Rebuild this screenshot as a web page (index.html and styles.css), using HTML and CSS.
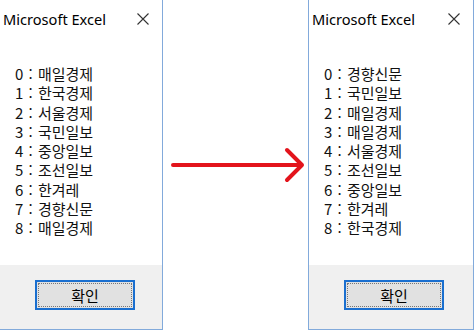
FILE: index.html
```html
<!DOCTYPE html>
<html lang="ko">
<head>
  <meta charset="UTF-8">
  <title>Msgbox order</title>
  <link rel="stylesheet" href="styles.css">
</head>
<body>
<div class="dialog dialog-left">
  <div class="titlebar">
    <span class="title">Microsoft Excel</span>
    <svg class="close" width="12" height="12" viewBox="0 0 12 12"><path d="M0.5 0.5 L11.5 11.5 M11.5 0.5 L0.5 11.5" stroke="#333" stroke-width="1.1" fill="none"/></svg>
  </div>
  <ul class="list">
    <li>0 : 매일경제</li>
    <li>1 : 한국경제</li>
    <li>2 : 서울경제</li>
    <li>3 : 국민일보</li>
    <li>4 : 중앙일보</li>
    <li>5 : 조선일보</li>
    <li>6 : 한겨레</li>
    <li>7 : 경향신문</li>
    <li>8 : 매일경제</li>
  </ul>
  <div class="footer">
    <button class="ok">확인</button>
  </div>
</div>

<div class="arrow">
  <svg width="145" height="40" viewBox="0 0 145 40">
    <path d="M10 20 L139 20 M124 5 L139 20 L124 35" stroke="#e3141c" stroke-width="4" stroke-linecap="round" stroke-linejoin="round" fill="none"/>
  </svg>
</div>

<div class="dialog dialog-right">
  <div class="titlebar">
    <span class="title">Microsoft Excel</span>
    <svg class="close" width="12" height="12" viewBox="0 0 12 12"><path d="M0.5 0.5 L11.5 11.5 M11.5 0.5 L0.5 11.5" stroke="#333" stroke-width="1.1" fill="none"/></svg>
  </div>
  <ul class="list">
    <li>0 : 경향신문</li>
    <li>1 : 국민일보</li>
    <li>2 : 매일경제</li>
    <li>3 : 매일경제</li>
    <li>4 : 서울경제</li>
    <li>5 : 조선일보</li>
    <li>6 : 중앙일보</li>
    <li>7 : 한겨레</li>
    <li>8 : 한국경제</li>
  </ul>
  <div class="footer">
    <button class="ok">확인</button>
  </div>
</div>
</body>
</html>
```

FILE: styles.css
```css
* {
  margin: 0;
  padding: 0;
  box-sizing: border-box;
}

body {
  width: 474px;
  height: 332px;
  overflow: hidden;
  background: #fff;
  display: flex;
  align-items: flex-start;
  font-family: "Noto Sans CJK KR", "Noto Sans", sans-serif;
  color: #111;
}

.dialog {
  margin-top: -1px;
  height: 331px;
  border: 1px solid #82aadb;
  background: #fff;
  display: flex;
  flex-direction: column;
}

.dialog-left {
  width: 164px;
  margin-left: -1px;
}

.dialog-right {
  width: 166px;
}

.titlebar {
  height: 35px;
  display: flex;
  align-items: center;
  justify-content: space-between;
  padding: 2px 13px 0 3px;
}

.title {
  font-family: "Noto Sans", sans-serif;
  font-size: 14.6px;
  color: #000;
}

.list {
  list-style: none;
  padding: 29px 0 0 15px;
  font-size: 15px;
  line-height: 19.25px;
  word-spacing: 1px;
  flex: 1;
}

.footer {
  height: 64px;
  background: #f0f0f0;
  padding: 15px 0 0 35px;
}

.ok {
  width: 100px;
  height: 30px;
  background: #e1e1e1;
  border: 2px solid #1a6fcf;
  outline: 1px dotted #777;
  outline-offset: -4px;
  font-family: "Noto Sans CJK KR", sans-serif;
  font-size: 15px;
  color: #000;
}

.arrow {
  width: 145px;
  padding-top: 145px;
  display: flex;
}
```
